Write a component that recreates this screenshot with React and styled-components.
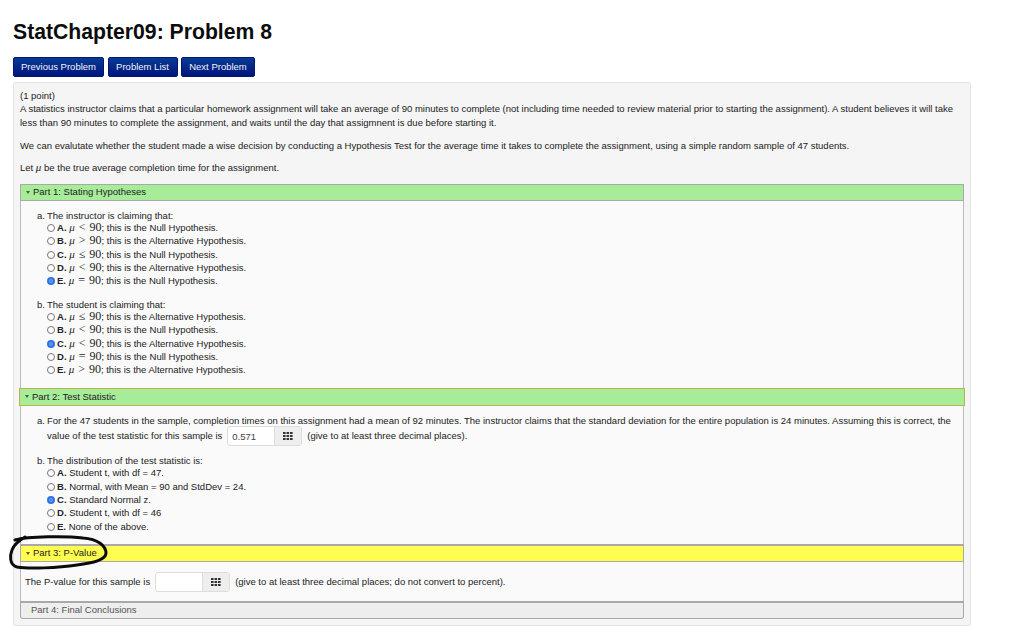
import React from "react";
import styled, { createGlobalStyle } from "styled-components";

const GlobalStyle = createGlobalStyle`
    html, body {
        margin: 0;
        padding: 0;
        background: #fff;
    }
    body {
        font-family: "Liberation Sans", Arial, sans-serif;
        font-size: 9.5px;
        line-height: 13.33px;
        color: #222;
    }
`

const Page = styled.div`
    position: relative;
    width: 1024px;
    height: 637px;
    overflow: hidden;
    padding: 20px 53px 0 13px;
    box-sizing: border-box;
`
const Title = styled.h1`
    margin: 0;
    height: 37px;
    font-size: 21.2px;
    line-height: 24px;
    font-weight: 700;
    color: #0c0c0c;
`
const Nav = styled.div`
    display: flex;
    gap: 3.5px;
    height: 25px;
`
const NavButton = styled.a`
    display: block;
    width: ${props => props.w}px;
    height: 20px;
    box-sizing: border-box;
    text-align: center;
    line-height: 18px;
    color: #f2f4fb;
    border-radius: 2px;
    background: linear-gradient(#073a94, #00147c);
    border: 1px solid #03176f;
`
const Well = styled.div`
    box-sizing: border-box;
    width: 958px;
    height: 544px;
    background: #f5f5f5;
    border: 1px solid #e4e4e4;
    border-radius: 2px;
    padding: 6px 6px 0 6px;
`
const Para = styled.p`
    margin: 0 0 ${props => props.mb || 10}px;
`
const Mu = styled.i`
    font-family: "Liberation Serif", serif;
    font-size: 11px;
    line-height: 0;
`
const MathText = styled.span`
    font-family: "Liberation Serif", serif;
    font-size: 12px;
    line-height: 0;
    margin: 0 ${props => props.gap || 0}px;
`
const Header = styled.div`
    box-sizing: border-box;
    height: ${props => props.h || 17}px;
    margin: 0 ${props => props.wide ? -1 : 0}px;
    background: ${props => props.bg};
    border: 1px solid ${props => props.edge || "#a9a9a9"};
    border-top-width: ${props => props.top || 1}px;
    padding-left: ${props => props.muted ? 10 : 5}px;
    display: flex;
    align-items: center;
    gap: 3px;
    color: ${props => props.muted ? "#555" : "#222"};
    ${props => props.muted && "border-radius: 0 0 3px 3px;"}
`
const Arrow = styled.span`
    width: 0;
    height: 0;
    border-left: 2.5px solid transparent;
    border-right: 2.5px solid transparent;
    border-top: 3px solid #555;
`
const Body = styled.div`
    box-sizing: border-box;
    height: ${props => props.h}px;
    background: #fafafa;
    border-left: 1px solid #bbb;
    border-right: 1px solid #bbb;
    padding: ${props => props.pt}px 8px 0 ${props => props.pl || 26}px;
`
const Question = styled.div`
    position: relative;
    margin-bottom: ${props => props.mb || 0}px;
`
const Marker = styled.span`
    position: absolute;
    left: -10px;
`
const ChoiceList = styled.div`
    margin-top: -1px;
`
const Choice = styled.div`
    display: flex;
    align-items: center;
    height: 13.33px;
`
const ChoiceText = styled.span`
    white-space: pre;
`
const Radio = styled.span`
    box-sizing: border-box;
    flex: none;
    width: 8px;
    height: 8px;
    margin: 1px 2px 0 0;
    border-radius: 50%;
    border: ${props => props.on ? "2px solid #2f72e8" : "1px solid #777"};
    background: ${props => props.on ? "#3f7ff0" : "#fdfdfd"};
    ${props => props.on && "box-shadow: inset 0 0 0 1px #7fa8f0;"}
`
const InputLine = styled.div`
    display: flex;
    align-items: center;
    height: 20px;
    margin-top: ${props => props.mt || 0}px;
`
const InputGroup = styled.span`
    display: flex;
    box-sizing: border-box;
    width: 75px;
    height: 20px;
    margin: 0 5px;
    background: #fff;
    border: 1px solid #ddd;
    border-radius: 3px;
`
const InputValue = styled.span`
    flex: 1;
    padding-left: 4px;
    line-height: 19px;
    color: #444;
`
const GridButton = styled.span`
    display: flex;
    align-items: center;
    justify-content: center;
    width: 26px;
    background: #eee;
    border-left: 1px solid #ddd;
`
const Scribble = styled.svg`
    position: absolute;
    left: 8px;
    top: 533px;
    pointer-events: none;
`

const GridIcon = () => (
    <svg width="10" height="8" viewBox="0 0 10 8">
        {[0, 3, 6].map(y => [0, 3.5, 7].map(x => (
            <rect key={`${x}-${y}`} x={x} y={y} width="2.6" height="2" fill="#333" />
        )))}
    </svg>
)

const Formula = ({ op }) => (
    <>
        <Mu>μ</Mu>
        <MathText gap={4}>{op}</MathText>
        <MathText>90</MathText>
        {"; "}
    </>
)

const Choices = ({ items, checked }) => (
    <ChoiceList>
        {items.map((item, index) => (
            <Choice key={index}>
                <Radio on={index === checked} />
                <ChoiceText><b>{"ABCDE"[index]}.</b> {item}</ChoiceText>
            </Choice>
        ))}
    </ChoiceList>
)

const hypotheses1 = [
    <><Formula op="<" />this is the Null Hypothesis.</>,
    <><Formula op=">" />this is the Alternative Hypothesis.</>,
    <><Formula op="≤" />this is the Null Hypothesis.</>,
    <><Formula op="<" />this is the Alternative Hypothesis.</>,
    <><Formula op="=" />this is the Null Hypothesis.</>,
]
const hypotheses2 = [
    <><Formula op="≤" />this is the Alternative Hypothesis.</>,
    <><Formula op="<" />this is the Null Hypothesis.</>,
    <><Formula op="<" />this is the Alternative Hypothesis.</>,
    <><Formula op="=" />this is the Null Hypothesis.</>,
    <><Formula op=">" />this is the Alternative Hypothesis.</>,
]
const distributions = [
    "Student t, with df = 47.",
    "Normal, with Mean = 90 and StdDev = 24.",
    "Standard Normal z.",
    "Student t, with df = 46",
    "None of the above.",
]

const App = () => (
    <Page>
        <GlobalStyle />
        <Title>StatChapter09: Problem 8</Title>
        <Nav>
            <NavButton w={91}>Previous Problem</NavButton>
            <NavButton w={70}>Problem List</NavButton>
            <NavButton w={74}>Next Problem</NavButton>
        </Nav>
        <Well>
            <Para>
                (1 point)<br />
                A statistics instructor claims that a particular homework assignment will take an average of 90 minutes to complete (not including time needed to review material prior to starting the assignment). A student believes it will take less than 90 minutes to complete the assignment, and waits until the day that assigmnent is due before starting it.
            </Para>
            <Para mb={9}>We can evalutate whether the student made a wise decision by conducting a Hypothesis Test for the average time it takes to complete the assignment, using a simple random sample of 47 students.</Para>
            <Para mb={9}>Let <Mu>μ</Mu> be the true average completion time for the assignment.</Para>

            <Header bg="#a6ec99"><Arrow />Part 1: Stating Hypotheses</Header>
            <Body h={187} pt={8}>
                <Question mb={10}>
                    <Marker>a.</Marker>
                    The instructor is claiming that:
                    <Choices items={hypotheses1} checked={4} />
                </Question>
                <Question>
                    <Marker>b.</Marker>
                    The student is claiming that:
                    <Choices items={hypotheses2} checked={2} />
                </Question>
            </Body>

            <Header bg="#a6ec99" edge="#bdb24a" h={18} wide><Arrow />Part 2: Test Statistic</Header>
            <Body h={138} pt={8}>
                <Question mb={8}>
                    <Marker>a.</Marker>
                    For the 47 students in the sample, completion times on this assignment had a mean of 92 minutes. The instructor claims that the standard deviation for the entire population is 24 minutes. Assuming this is correct, the
                    <InputLine mt={-1}>
                        value of the test statistic for this sample is
                        <InputGroup>
                            <InputValue>0.571</InputValue>
                            <GridButton><GridIcon /></GridButton>
                        </InputGroup>
                        (give to at least three decimal places).
                    </InputLine>
                </Question>
                <Question>
                    <Marker>b.</Marker>
                    The distribution of the test statistic is:
                    <Choices items={distributions} checked={2} />
                </Question>
            </Body>

            <Header bg="#fffd50" top={2} h={18}><Arrow />Part 3: P-Value</Header>
            <Body h={39} pt={10} pl={4}>
                <InputLine>
                    The P-value for this sample is
                    <InputGroup>
                        <InputValue />
                        <GridButton><GridIcon /></GridButton>
                    </InputGroup>
                    (give to at least three decimal places; do not convert to percent).
                </InputLine>
            </Body>

            <Header bg="#eee" muted top={2} h={18}>Part 4: Final Conclusions</Header>
        </Well>
        <Scribble width="104" height="38" viewBox="0 0 104 38">
            <path d="M7 7 C 20 3, 60 3, 75 5 C 90 6, 98 13, 98 20 C 98 27, 85 30, 69 32 C 50 35, 20 36, 9 34 C 1 32, 2 22, 4 17 C 6 11, 12 7, 17 4" fill="none" stroke="#0b0b0b" strokeWidth="3" strokeLinecap="round" />
        </Scribble>
    </Page>
)

export default App;
